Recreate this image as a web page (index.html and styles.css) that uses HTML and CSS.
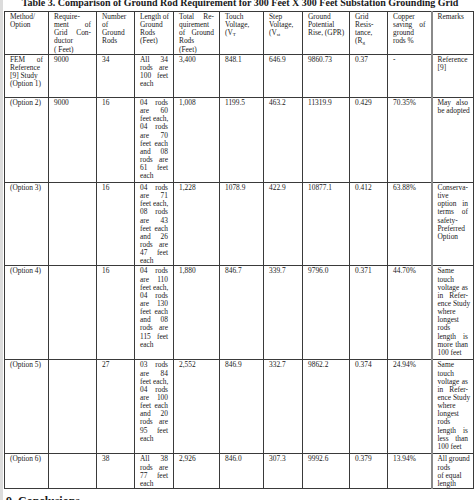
FILE: index.html
```html
<!DOCTYPE html>
<html>
<head>
<meta charset="utf-8">
<link rel="stylesheet" href="styles.css">
</head>
<body>
<div class="page">
  <h1 class="title">Table 3. Comparison of Ground Rod Requirement for 300 Feet X 300 Feet Substation Grounding Grid</h1>
  <table class="grid">
    <colgroup>
      <col style="width:44px"><col style="width:48px"><col style="width:38px"><col style="width:39px"><col style="width:46px"><col style="width:44px"><col style="width:39px"><col style="width:47px"><col style="width:38px"><col style="width:44px"><col style="width:42px">
    </colgroup>
    <tr class="head">
      <td><span>Method/</span><span>Option</span></td>
      <td><span>Require-</span><span class="j">ment of</span><span class="j">Grid Con-</span><span>ductor</span><span>( Feet)</span></td>
      <td><span>Number</span><span>of</span><span>Ground</span><span>Rods</span></td>
      <td><span>Length of</span><span>Ground</span><span>Rods</span><span>(Feet)</span></td>
      <td><span class="j">Total Re-</span><span>quirement</span><span class="j">of Ground</span><span>Rods</span><span>(Feet)</span></td>
      <td><span>Touch</span><span>Voltage,</span><span>(V<sub>T</sub></span></td>
      <td><span>Step</span><span>Voltage,</span><span>(V<sub>st</sub></span></td>
      <td><span>Ground</span><span>Potential</span><span>Rise, (GPR)</span></td>
      <td><span>Grid</span><span>Resis-</span><span>tance,</span><span>(R<sub>g</sub></span></td>
      <td><span>Copper</span><span class="j">saving of</span><span>ground</span><span>rods %</span></td>
      <td class="rm"><span>Remarks</span></td>
    </tr>
    <tr class="r1">
      <td><span class="j">FEM of</span><span>Reference</span><span>[9] Study</span><span>(Option 1)</span></td>
      <td>9000</td>
      <td>34</td>
      <td><span class="j">All 34</span><span class="j">rods are</span><span class="j">100 feet</span><span>each</span></td>
      <td>3,400</td>
      <td>848.1</td>
      <td>646.9</td>
      <td>9860.73</td>
      <td>0.37</td>
      <td>-</td>
      <td class="rm"><span>Reference</span><span>[9]</span></td>
    </tr>
    <tr class="r2">
      <td>(Option 2)</td>
      <td>9000</td>
      <td>16</td>
      <td><span class="j">04 rods</span><span class="j">are 60</span><span class="j">feet each,</span><span class="j">04 rods</span><span class="j">are 70</span><span class="j">feet each</span><span class="j">and 08</span><span class="j">rods are</span><span class="j">61 feet</span><span>each</span></td>
      <td>1,008</td>
      <td>1199.5</td>
      <td>463.2</td>
      <td>11319.9</td>
      <td>0.429</td>
      <td>70.35%</td>
      <td class="rm"><span class="j">May also</span><span>be adopted</span></td>
    </tr>
    <tr class="r3">
      <td>(Option 3)</td>
      <td></td>
      <td>16</td>
      <td><span class="j">04 rods</span><span class="j">are 71</span><span class="j">feet each,</span><span class="j">08 rods</span><span class="j">are 43</span><span class="j">feet each</span><span class="j">and 26</span><span class="j">rods are</span><span class="j">47 feet</span><span>each</span></td>
      <td>1,228</td>
      <td>1078.9</td>
      <td>422.9</td>
      <td>10877.1</td>
      <td>0.412</td>
      <td>63.88%</td>
      <td class="rm"><span>Conserva-</span><span>tive</span><span class="j">option in</span><span class="j">terms of</span><span>safety-</span><span>Preferred</span><span>Option</span></td>
    </tr>
    <tr class="r4">
      <td>(Option 4)</td>
      <td></td>
      <td>16</td>
      <td><span class="j">04 rods</span><span class="j">are 110</span><span class="j">feet each,</span><span class="j">04 rods</span><span class="j">are 130</span><span class="j">feet each</span><span class="j">and 08</span><span class="j">rods are</span><span class="j">115 feet</span><span>each</span></td>
      <td>1,880</td>
      <td>846.7</td>
      <td>339.7</td>
      <td>9796.0</td>
      <td>0.371</td>
      <td>44.70%</td>
      <td class="rm"><span>Same</span><span>touch</span><span class="j">voltage as</span><span class="j">in Refer-</span><span class="j">ence Study</span><span>where</span><span>longest</span><span>rods</span><span class="j">length is</span><span class="j">more than</span><span>100 feet</span></td>
    </tr>
    <tr class="r5">
      <td>(Option 5)</td>
      <td></td>
      <td>27</td>
      <td><span class="j">03 rods</span><span class="j">are 84</span><span class="j">feet each,</span><span class="j">04 rods</span><span class="j">are 100</span><span class="j">feet each</span><span class="j">and 20</span><span class="j">rods are</span><span class="j">95 feet</span><span>each</span></td>
      <td>2,552</td>
      <td>846.9</td>
      <td>332.7</td>
      <td>9862.2</td>
      <td>0.374</td>
      <td>24.94%</td>
      <td class="rm"><span>Same</span><span>touch</span><span class="j">voltage as</span><span class="j">in Refer-</span><span class="j">ence Study</span><span>where</span><span>longest</span><span>rods</span><span class="j">length is</span><span class="j">less than</span><span>100 feet</span></td>
    </tr>
    <tr class="r6">
      <td>(Option 6)</td>
      <td></td>
      <td>38</td>
      <td><span class="j">All 38</span><span class="j">rods are</span><span class="j">77 feet</span><span>each</span></td>
      <td>2,926</td>
      <td>846.0</td>
      <td>307.3</td>
      <td>9992.6</td>
      <td>0.379</td>
      <td>13.94%</td>
      <td class="rm"><span>All ground</span><span>rods</span><span>of equal</span><span>length</span></td>
    </tr>
  </table>
  <h2 class="section">9. Conclusions</h2>
</div>
</body>
</html>
```

FILE: styles.css
```css
html, body {
  margin: 0;
  padding: 0;
  background: #ffffff;
}
body {
  width: 474px;
  height: 500px;
  overflow: hidden;
  font-family: "Liberation Serif", "Times New Roman", serif;
  color: #1a1a1a;
}
.page {
  border-left: 3px solid #dcdcdc;
  padding-left: 1px;
  width: 470px;
}
.title {
  margin: -3px 0 0 0;
  font-size: 10px;
  line-height: 12px;
  font-weight: bold;
  text-align: center;
  white-space: nowrap;
  height: 12px;
  padding-left: 2px;
}
.grid {
  margin-top: 2px;
  border-collapse: collapse;
  table-layout: fixed;
  width: 469px;
  font-size: 7.4px;
  line-height: 8.15px;
}
.grid td {
  border: 1px solid #3a3a3a;
  vertical-align: top;
  padding: 1px 5px 0 5px;
  text-align: left;
  overflow: hidden;
}
.grid td span {
  display: block;
  height: 8.15px;
  white-space: nowrap;
}
.grid td span.j {
  text-align: justify;
  text-align-last: justify;
}
.grid td.rm {
  border-left: 2px solid #8a8a8a;
}
.grid sub {
  font-size: 5px;
  line-height: 0;
  vertical-align: -1px;
}
.head td { height: 41px; }
.r1 td { height: 41px; }
.r2 td { height: 83px; }
.r3 td { height: 81px; }
.r4 td { height: 92px; }
.r5 td { height: 92px; }
.r6 td { height: 31px; }
.section {
  margin: 5px 0 0 2px;
  font-size: 12px;
  line-height: 14px;
  font-weight: bold;
}
```
